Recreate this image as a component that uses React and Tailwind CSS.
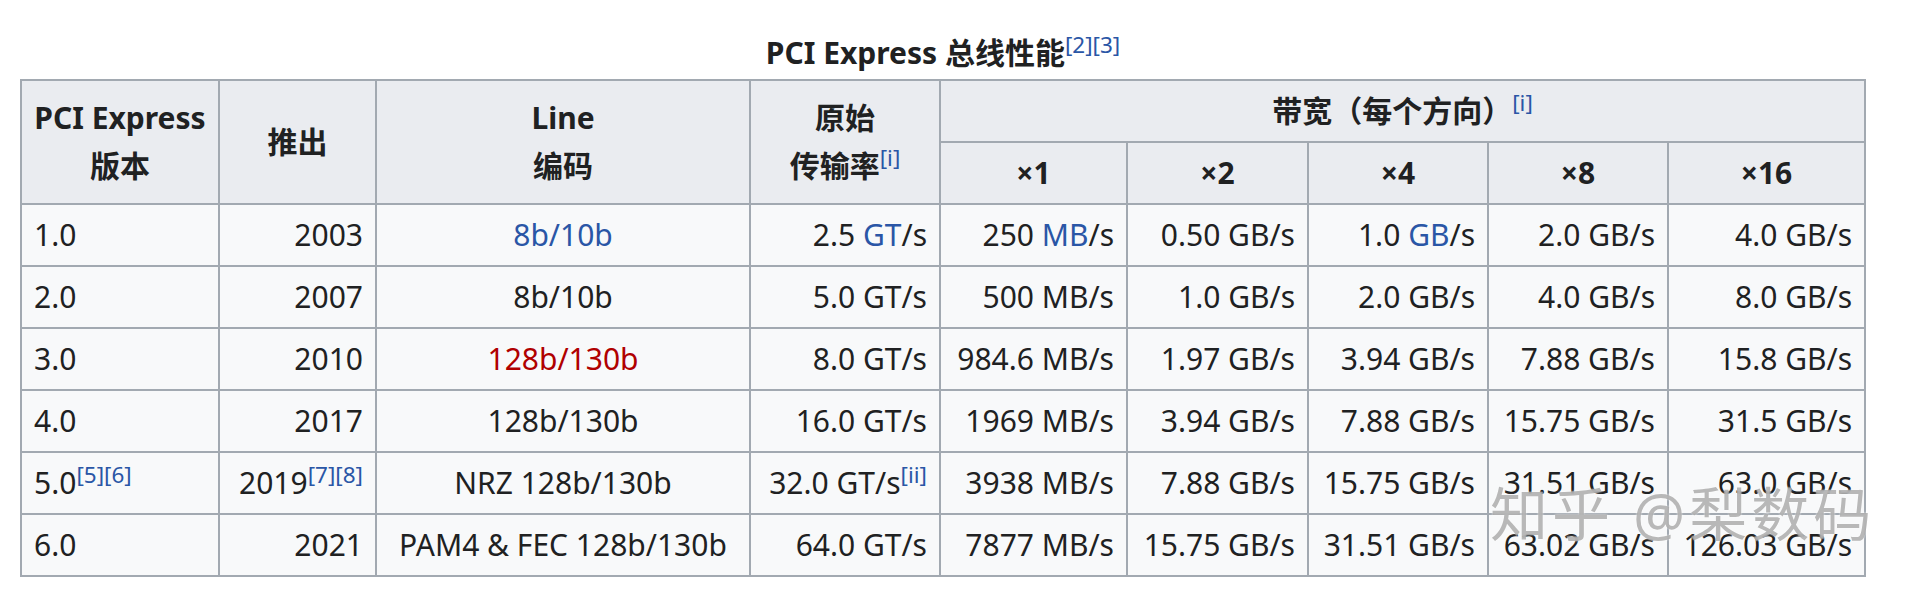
import React from "react";

const Ref = ({ children }) => (
  <sup className="font-normal text-[#2a56a6]">{children}</sup>
);

const Link = ({ children }) => <span className="text-[#2a56a6]">{children}</span>;

const rows = [
  ["1.0", "2003", <Link>8b/10b</Link>, <>2.5 <Link>GT</Link>/s</>, <>250 <Link>MB</Link>/s</>, "0.50 GB/s", <>1.0 <Link>GB</Link>/s</>, "2.0 GB/s", "4.0 GB/s"],
  ["2.0", "2007", "8b/10b", "5.0 GT/s", "500 MB/s", "1.0 GB/s", "2.0 GB/s", "4.0 GB/s", "8.0 GB/s"],
  ["3.0", "2010", <span className="text-[#b00000]">128b/130b</span>, "8.0 GT/s", "984.6 MB/s", "1.97 GB/s", "3.94 GB/s", "7.88 GB/s", "15.8 GB/s"],
  ["4.0", "2017", "128b/130b", "16.0 GT/s", "1969 MB/s", "3.94 GB/s", "7.88 GB/s", "15.75 GB/s", "31.5 GB/s"],
  [<>5.0<Ref>[5][6]</Ref></>, <>2019<Ref>[7][8]</Ref></>, "NRZ 128b/130b", <>32.0 GT/s<Ref>[ii]</Ref></>, "3938 MB/s", "7.88 GB/s", "15.75 GB/s", "31.51 GB/s", "63.0 GB/s"],
  ["6.0", "2021", "PAM4 & FEC 128b/130b", "64.0 GT/s", "7877 MB/s", "15.75 GB/s", "31.51 GB/s", "63.02 GB/s", "126.03 GB/s"],
];

const align = ["text-left", "text-right", "text-center", "text-right", "text-right", "text-right", "text-right", "text-right", "text-right"];

const th = "border-2 border-[#a2a9b1] bg-[#eaecf0] px-3 py-1.5 text-center font-bold";
const td = "border-2 border-[#a2a9b1] bg-[#f8f9fa] px-3 py-1.5 whitespace-nowrap";

export default function App() {
  return (
    <div className="relative min-h-[596px] bg-white pl-[20px] pt-[29px] font-['Noto_Sans','Noto_Sans_CJK_SC',sans-serif] text-[30px] leading-[48px] text-[#202122]">
      <table className="table-fixed border-collapse w-[1844px]">
        <caption className="pb-[2px] font-bold">
          PCI Express 总线性能<Ref>[2][3]</Ref>
        </caption>
        <colgroup>
          <col className="w-[198px]" />
          <col className="w-[157px]" />
          <col className="w-[374px]" />
          <col className="w-[190px]" />
          <col className="w-[187px]" />
          <col className="w-[181px]" />
          <col className="w-[180px]" />
          <col className="w-[180px]" />
          <col className="w-[197px]" />
        </colgroup>
        <thead>
          <tr>
            <th rowSpan={2} className={th}>PCI Express<br />版本</th>
            <th rowSpan={2} className={th}>推出</th>
            <th rowSpan={2} className={th}>Line<br />编码</th>
            <th rowSpan={2} className={th}>原始<br />传输率<Ref>[i]</Ref></th>
            <th colSpan={5} className={th}>带宽（每个方向）<Ref>[i]</Ref></th>
          </tr>
          <tr>
            {["×1", "×2", "×4", "×8", "×16"].map((x) => (
              <th key={x} className={th}>{x}</th>
            ))}
          </tr>
        </thead>
        <tbody>
          {rows.map((r, i) => (
            <tr key={i}>
              {r.map((c, j) => (
                <td key={j} className={`${td} ${align[j]}`}>{c}</td>
              ))}
            </tr>
          ))}
        </tbody>
      </table>
      <div className="pointer-events-none absolute left-[1490px] top-[482px] select-none text-[58px] leading-[64px] tracking-[4px] text-[#9a9a9a]/70 [text-shadow:0_0_2px_rgba(255,255,255,0.9)]">
        知乎 @梨数码
      </div>
    </div>
  );
}
